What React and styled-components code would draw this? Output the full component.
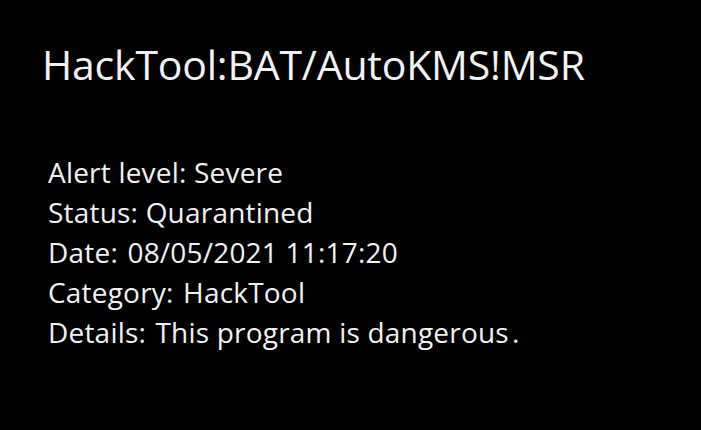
import React from 'react'
import styled, { createGlobalStyle } from 'styled-components'

const GlobalStyle = createGlobalStyle`
  html, body {
    margin: 0;
    padding: 0;
    background: #000;
  }
`

const alert = {
  name: 'HackTool:BAT/AutoKMS!MSR',
  rows: [
    { label: 'Alert level:', value: 'Severe' },
    { label: 'Status:', value: 'Quarantined' },
    { label: 'Date:', value: '08/05/2021 11:17:20', wide: true },
    { label: 'Category:', value: 'HackTool', wide: true },
    { label: 'Details:', value: 'This program is dangerous', end: '.', wide: true },
  ],
}

const Screen = styled.div`
  width: 701px;
  height: 430px;
  box-sizing: border-box;
  background: #000;
  color: #f2f2f2;
  font-family: 'Open Sans', 'Noto Sans', sans-serif;
  padding: 37px 0 0 42px;
  overflow: hidden;
`

const Title = styled.h1`
  margin: 0;
  font-size: 41px;
  font-weight: 400;
  line-height: 54px;
  letter-spacing: -0.2px;
`

const Details = styled.div`
  display: flex;
  flex-direction: column;
  margin: 61px 0 0 6px;
`

const Row = styled.div`
  font-size: 28px;
  line-height: 40px;
  letter-spacing: 0.2px;
  white-space: pre;
`

const Label = styled.span`
  margin-right: ${p => (p.$wide ? '2px' : '0')};
`

const End = styled.span`
  margin-left: 3px;
`

export default function App() {
  return (
    <>
      <GlobalStyle />
      <Screen>
        <Title>{alert.name}</Title>
        <Details>
          {alert.rows.map(row => (
            <Row key={row.label}>
              <Label $wide={row.wide}>{row.label}</Label> {row.value}
              {row.end && <End>{row.end}</End>}
            </Row>
          ))}
        </Details>
      </Screen>
    </>
  )
}
